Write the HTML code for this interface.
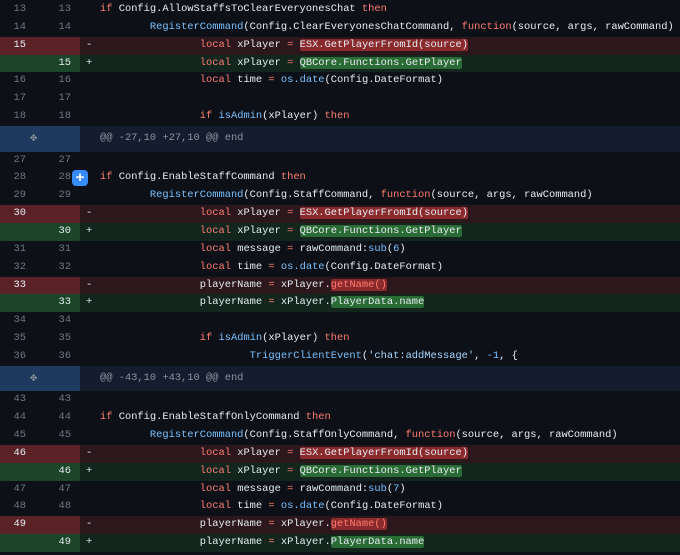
<!DOCTYPE html>
<html><head><meta charset="utf-8"><style>
*{margin:0;padding:0;box-sizing:border-box}
body{width:680px;height:555px;background:#0d1117;font-family:"Liberation Mono",monospace;font-size:10.4px;color:#e6edf3;overflow:hidden;position:relative}
.r{position:relative;height:17.85px;line-height:17.85px;white-space:pre}
.n1,.n2{position:absolute;top:0;width:26px;text-align:right;color:#6e7681}
.n1{left:0}.n2{left:45px}
.g{position:absolute;left:0;top:0;width:80px;height:100%}
.s{position:absolute;left:86px;top:0}
.c{position:absolute;left:100px;top:0}
.d{background:#2b171c}.d .g{background:#5a2227}.d .n1,.d .n2{color:#e6edf3}
.a{background:#12261e}.a .g{background:#1c4428}.a .n1,.a .n2{color:#e6edf3}
.h{position:relative;height:25.7px;line-height:25.7px;background:#131d2e;color:#8b949e}
.h .g{background:#1f3a5f}
.k{color:#ff7b72}.f{color:#79c0ff}.st{color:#a5d6ff}
.hd{background:#8a2a2c;border-radius:2px}.ha{background:#2a6a34;border-radius:2px}
.plus{position:absolute;left:72px;top:1px;width:16px;height:16px;background:#388bfd;border-radius:4px;color:#fff;font:bold 15px/16px "Liberation Sans",sans-serif;text-align:center}
</style></head><body>
<div style="height:1px"></div>
<div class="r"><span class="n1">13</span><span class="n2">13</span><span class="c"><span class="k">if</span> Config.AllowStaffsToClearEveryonesChat <span class="k">then</span></span></div>
<div class="r"><span class="n1">14</span><span class="n2">14</span><span class="c">        <span class="f">RegisterCommand</span>(Config.ClearEveryonesChatCommand, <span class="k">function</span>(source, args, rawCommand)</span></div>
<div class="r d"><span class="g"></span><span class="n1">15</span><span class="s">-</span><span class="c">                <span class="k">local</span> xPlayer <span class="k">=</span> <span class="hd">ESX.GetPlayerFromId(source)</span></span></div>
<div class="r a"><span class="g"></span><span class="n2">15</span><span class="s">+</span><span class="c">                <span class="k">local</span> xPlayer <span class="k">=</span> <span class="ha">QBCore.Functions.GetPlayer</span></span></div>
<div class="r"><span class="n1">16</span><span class="n2">16</span><span class="c">                <span class="k">local</span> time <span class="k">=</span> <span class="f">os.date</span>(Config.DateFormat)</span></div>
<div class="r"><span class="n1">17</span><span class="n2">17</span></div>
<div class="r"><span class="n1">18</span><span class="n2">18</span><span class="c">                <span class="k">if</span> <span class="f">isAdmin</span>(xPlayer) <span class="k">then</span></span></div>
<div class="h"><span class="g"></span><span style="position:absolute;left:30px;top:0;color:#8b949e;font-size:12px">✥</span><span class="c">@@ -27,10 +27,10 @@ end</span></div>
<div class="r"><span class="n1">27</span><span class="n2">27</span></div>
<div class="r"><span class="n1">28</span><span class="n2">28</span><span class="plus">+</span><span class="c"><span class="k">if</span> Config.EnableStaffCommand <span class="k">then</span></span></div>
<div class="r"><span class="n1">29</span><span class="n2">29</span><span class="c">        <span class="f">RegisterCommand</span>(Config.StaffCommand, <span class="k">function</span>(source, args, rawCommand)</span></div>
<div class="r d"><span class="g"></span><span class="n1">30</span><span class="s">-</span><span class="c">                <span class="k">local</span> xPlayer <span class="k">=</span> <span class="hd">ESX.GetPlayerFromId(source)</span></span></div>
<div class="r a"><span class="g"></span><span class="n2">30</span><span class="s">+</span><span class="c">                <span class="k">local</span> xPlayer <span class="k">=</span> <span class="ha">QBCore.Functions.GetPlayer</span></span></div>
<div class="r"><span class="n1">31</span><span class="n2">31</span><span class="c">                <span class="k">local</span> message <span class="k">=</span> rawCommand:<span class="f">sub</span>(<span class="f">6</span>)</span></div>
<div class="r"><span class="n1">32</span><span class="n2">32</span><span class="c">                <span class="k">local</span> time <span class="k">=</span> <span class="f">os.date</span>(Config.DateFormat)</span></div>
<div class="r d"><span class="g"></span><span class="n1">33</span><span class="s">-</span><span class="c">                playerName <span class="k">=</span> xPlayer.<span class="hd k">getName()</span></span></div>
<div class="r a"><span class="g"></span><span class="n2">33</span><span class="s">+</span><span class="c">                playerName <span class="k">=</span> xPlayer.<span class="ha">PlayerData.name</span></span></div>
<div class="r"><span class="n1">34</span><span class="n2">34</span></div>
<div class="r"><span class="n1">35</span><span class="n2">35</span><span class="c">                <span class="k">if</span> <span class="f">isAdmin</span>(xPlayer) <span class="k">then</span></span></div>
<div class="r"><span class="n1">36</span><span class="n2">36</span><span class="c">                        <span class="f">TriggerClientEvent</span>(<span class="st">'chat:addMessage'</span>, <span class="f">-1</span>, {</span></div>
<div class="h"><span class="g"></span><span style="position:absolute;left:30px;top:0;color:#8b949e;font-size:12px">✥</span><span class="c">@@ -43,10 +43,10 @@ end</span></div>
<div class="r"><span class="n1">43</span><span class="n2">43</span></div>
<div class="r"><span class="n1">44</span><span class="n2">44</span><span class="c"><span class="k">if</span> Config.EnableStaffOnlyCommand <span class="k">then</span></span></div>
<div class="r"><span class="n1">45</span><span class="n2">45</span><span class="c">        <span class="f">RegisterCommand</span>(Config.StaffOnlyCommand, <span class="k">function</span>(source, args, rawCommand)</span></div>
<div class="r d"><span class="g"></span><span class="n1">46</span><span class="s">-</span><span class="c">                <span class="k">local</span> xPlayer <span class="k">=</span> <span class="hd">ESX.GetPlayerFromId(source)</span></span></div>
<div class="r a"><span class="g"></span><span class="n2">46</span><span class="s">+</span><span class="c">                <span class="k">local</span> xPlayer <span class="k">=</span> <span class="ha">QBCore.Functions.GetPlayer</span></span></div>
<div class="r"><span class="n1">47</span><span class="n2">47</span><span class="c">                <span class="k">local</span> message <span class="k">=</span> rawCommand:<span class="f">sub</span>(<span class="f">7</span>)</span></div>
<div class="r"><span class="n1">48</span><span class="n2">48</span><span class="c">                <span class="k">local</span> time <span class="k">=</span> <span class="f">os.date</span>(Config.DateFormat)</span></div>
<div class="r d"><span class="g"></span><span class="n1">49</span><span class="s">-</span><span class="c">                playerName <span class="k">=</span> xPlayer.<span class="hd k">getName()</span></span></div>
<div class="r a"><span class="g"></span><span class="n2">49</span><span class="s">+</span><span class="c">                playerName <span class="k">=</span> xPlayer.<span class="ha">PlayerData.name</span></span></div>
</body></html>
